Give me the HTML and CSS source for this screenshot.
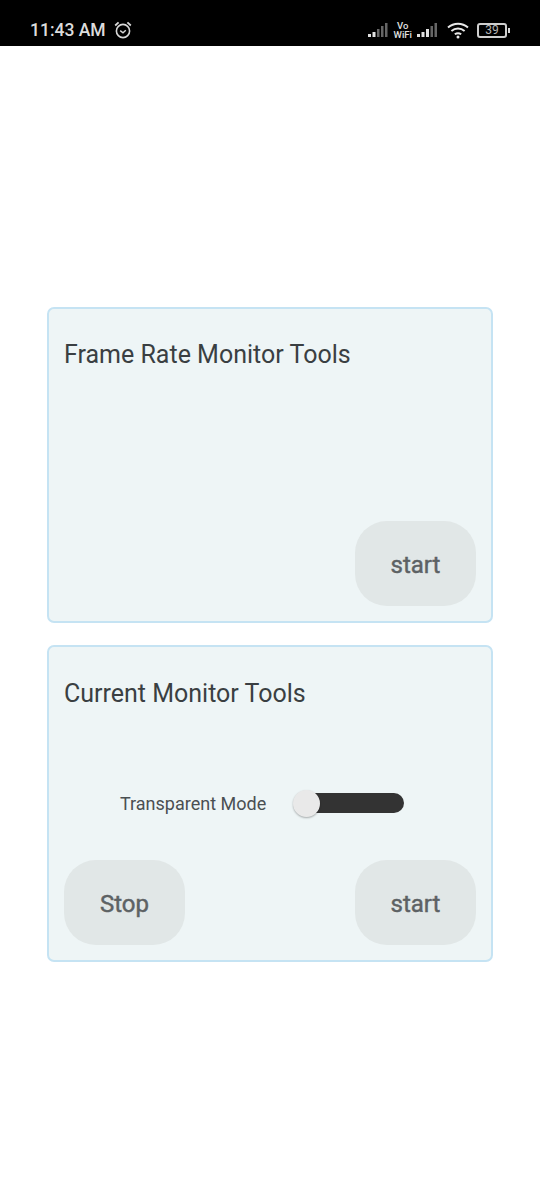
FILE: index.html
```html
<!doctype html>
<html lang="en">
	<head>
		<meta charset="UTF-8">
		<title>Monitor Tools</title>
		<link rel="stylesheet" href="styles.css">
	</head>
	<body>
		<div class="status">
			<div class="status-left">
				<span class="time">11:43 AM</span>
				<svg class="alarm" width="18" height="18" viewBox="0 0 18 18" fill="none" stroke="#d8d8d8">
					<circle cx="9" cy="10" r="6.6" stroke-width="1.6"/>
					<path d="M6.2 9.6l2.8 2.2 2.8-2.6" stroke-width="1.4"/>
					<path d="M1.2 4.5L4.6 1.4M16.8 4.5l-3.4-3.1" stroke-width="1.8"/>
				</svg>
			</div>
			<div class="status-right">
				<svg width="21" height="14" viewBox="0 0 21 14">
					<rect x="0" y="11" width="3" height="3" fill="#e0e0e0"/>
					<rect x="4.5" y="9" width="3" height="5" fill="#e0e0e0"/>
					<rect x="9" y="6" width="2.5" height="8" fill="#666"/>
					<rect x="13" y="3" width="2.5" height="11" fill="#666"/>
					<rect x="17" y="0" width="2.5" height="14" fill="#666"/>
				</svg>
				<div class="vowifi"><span>Vo</span><span>WiFi</span></div>
				<svg width="21" height="14" viewBox="0 0 21 14">
					<rect x="0" y="11" width="3" height="3" fill="#e0e0e0"/>
					<rect x="4.5" y="9" width="3" height="5" fill="#e0e0e0"/>
					<rect x="9" y="6" width="3" height="8" fill="#e0e0e0"/>
					<rect x="13.5" y="3" width="2.5" height="11" fill="#666"/>
					<rect x="17.5" y="0" width="2.5" height="14" fill="#666"/>
				</svg>
				<svg class="wifi" width="22" height="17" viewBox="0 0 22 17" fill="none" stroke="#e8e8e8" stroke-width="2">
					<path d="M1 5.6C6.8.6 15.2.6 21 5.6"/>
					<path d="M4.4 9c3.9-3.2 9.3-3.2 13.2 0"/>
					<path d="M7.8 12.3c2-1.4 4.4-1.4 6.4 0"/>
					<circle cx="11" cy="15" r="1.5" fill="#e8e8e8" stroke="none"/>
				</svg>
				<div class="battery">
					<div class="battery-body">39</div>
					<div class="battery-tip"></div>
				</div>
			</div>
		</div>
		<div class="main">
			<div class="card">
				<div class="card-title">Frame Rate Monitor Tools</div>
				<div class="btn-row end">
					<div class="btn">start</div>
				</div>
			</div>
			<div class="card card-tall">
				<div class="card-title">Current Monitor Tools</div>
				<div class="switch-row">
					<span class="switch-label">Transparent Mode</span>
					<div class="switch">
						<div class="switch-thumb"></div>
					</div>
				</div>
				<div class="btn-row">
					<div class="btn">Stop</div>
					<div class="btn">start</div>
				</div>
			</div>
		</div>
	</body>
</html>
```

FILE: styles.css
```css
html,body,div,span {
	margin: 0;
	padding: 0;
	box-sizing: border-box;
}
body {
	width: 540px;
	height: 1200px;
	background-color: #fff;
	font-family: Roboto, "Liberation Sans", sans-serif;
	overflow: hidden;
}
.status {
	height: 46px;
	background-color: #000;
	display: flex;
	justify-content: space-between;
	align-items: center;
	padding: 14px 30px 0 30px;
	color: #e0e0e0;
}
.status-left {
	display: flex;
	align-items: center;
	gap: 8px;
}
.time {
	font-size: 17.5px;
	font-weight: 500;
	color: #dcdcdc;
}
.status-right {
	display: flex;
	align-items: center;
	gap: 6px;
}
.vowifi {
	display: flex;
	flex-direction: column;
	align-items: center;
	font-size: 9.5px;
	line-height: 9px;
	font-weight: 500;
	color: #e0e0e0;
	margin: 0 -1px;
}
.wifi {
	margin: 0 2px 0 3px;
}
.battery {
	display: flex;
	align-items: center;
	gap: 1px;
}
.battery-body {
	width: 30px;
	height: 15px;
	border: 2px solid #cfcfcf;
	border-radius: 3px;
	font-size: 12px;
	line-height: 11px;
	text-align: center;
	color: #b5b5b5;
}
.battery-tip {
	width: 2px;
	height: 5px;
	background-color: #d8d8d8;
}
.main {
	padding: 261px 47px 0;
	display: flex;
	flex-direction: column;
	gap: 22px;
}
.card {
	height: 316px;
	background-color: #eef5f6;
	border: 2px solid #c5e3f3;
	border-radius: 7px;
	padding: 30px 15px 15px;
	display: flex;
	flex-direction: column;
}
.card-tall {
	height: 317px;
	padding-top: 31px;
}
.card-title {
	font-size: 25px;
	line-height: 32px;
	color: #3a3f42;
}
.switch-row {
	margin-top: 82px;
	display: flex;
	align-items: center;
	padding-left: 56px;
}
.switch-label {
	font-size: 18px;
	padding-top: 1px;
	color: #4a4f52;
	width: 172px;
}
.switch {
	position: relative;
	width: 110px;
	height: 20px;
	margin-left: 2px;
	background-color: #333;
	border-radius: 10px;
}
.switch-thumb {
	position: absolute;
	left: -1px;
	top: -3px;
	width: 27px;
	height: 27px;
	background-color: #e9e9e9;
	border-radius: 50%;
	box-shadow: 0 1px 2px rgba(0,0,0,.3);
}
.btn-row {
	margin-top: auto;
	display: flex;
	justify-content: space-between;
}
.btn-row.end {
	justify-content: flex-end;
}
.btn {
	width: 121px;
	height: 85px;
	background-color: #e1e7e7;
	border-radius: 32px;
	display: flex;
	align-items: center;
	justify-content: center;
	padding-top: 2px;
	font-size: 24px;
	color: #5d6264;
	-webkit-text-stroke: 0.45px #5d6264;
}
```
